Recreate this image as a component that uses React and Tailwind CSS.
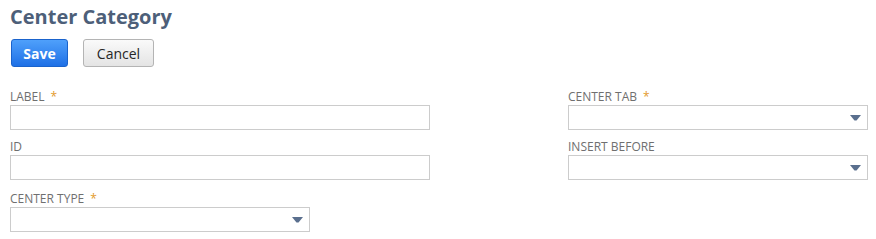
import React from "react";

function Label({ text, required }) {
  return (
    <div className="h-4 text-[12px] leading-4 uppercase text-[#6f6f6f]">
      {text}
      {required && <span className="ml-[6px] text-[#e39a2b]">*</span>}
    </div>
  );
}

function TextField({ label, required }) {
  return (
    <div>
      <Label text={label} required={required} />
      <input
        type="text"
        className="block h-[25px] w-[420px] border border-[#cccccc] bg-white px-1 text-[13px] outline-none"
      />
    </div>
  );
}

function SelectField({ label, required, className = "" }) {
  return (
    <div className={className}>
      <Label text={label} required={required} />
      <div className="relative h-[25px] w-[300px] border border-[#cccccc] bg-white">
        <svg
          className="absolute right-[6px] top-[9px]"
          width="11"
          height="6"
          viewBox="0 0 11 6"
        >
          <path d="M0 0 H11 L6.5 5.5 H4.5 Z" fill="#5a6f8e" />
        </svg>
      </div>
    </div>
  );
}

export default function App() {
  return (
    <div
      className="h-[239px] w-[876px] bg-white pl-[10px]"
      style={{ fontFamily: "'Open Sans', sans-serif" }}
    >
      <h1 className="pt-[2px] text-[20px] font-bold leading-[30px] text-[#4d5f79]">
        Center Category
      </h1>

      <div className="mt-[7px] flex gap-[15px] pl-[1px]">
        <button className="h-[28px] w-[57px] rounded-[3px] border border-[#1a63cc] bg-gradient-to-b from-[#4fa0fb] to-[#1e70e6] text-[14px] font-bold text-white">
          Save
        </button>
        <button className="h-[28px] w-[71px] rounded-[3px] border border-[#b4b4b4] bg-gradient-to-b from-[#fafafa] to-[#e4e4e4] text-[14px] text-[#262626]">
          Cancel
        </button>
      </div>

      <div className="mt-[22px] flex">
        <div className="flex w-[420px] flex-col gap-[9px]">
          <TextField label="Label" required />
          <TextField label="ID" />
          <SelectField label="Center Type" required className="mt-[2px]" />
        </div>
        <div className="ml-[138px] flex flex-col gap-[9px]">
          <SelectField label="Center Tab" required />
          <SelectField label="Insert Before" />
        </div>
      </div>
    </div>
  );
}
